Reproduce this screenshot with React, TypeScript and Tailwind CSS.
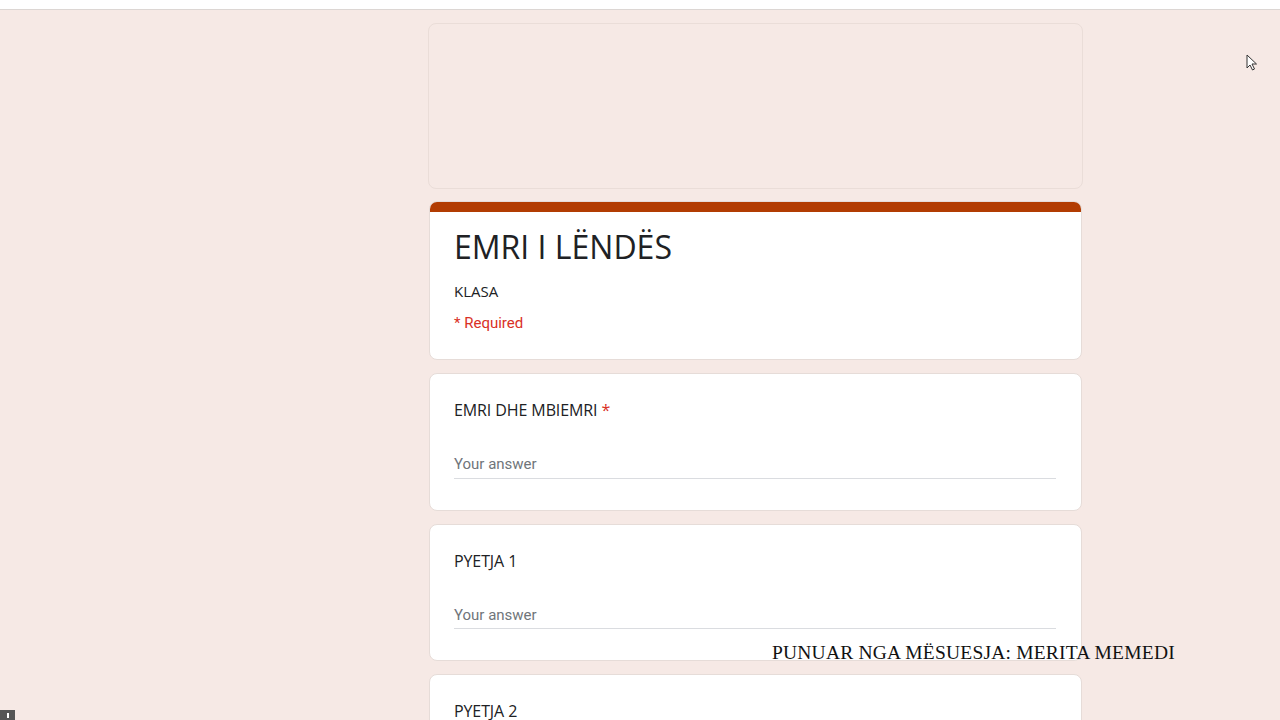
import React from 'react';

const Question = ({ label, required }: { label: string; required?: boolean }) => (
  <div className="bg-white rounded-lg border border-[#e6dcd8] px-6 pt-6 pb-[31px]">
    <div className="text-[16px] text-[#202124] leading-6 tracking-[-0.1px]" style={{ fontFamily: '"Open Sans", sans-serif' }}>
      {label}
      {required && <span className="text-[#d93025]"> *</span>}
    </div>
    <div className="mt-[31px] w-[602px] border-b border-[#dadce0] pb-[2px] text-[15px] text-[#70757a]" style={{ fontFamily: 'Roboto, sans-serif' }}>
      Your answer
    </div>
  </div>
);

export default function App() {
  return (
    <div className="relative h-[720px] w-[1280px] overflow-hidden bg-[#f6e9e5]">
      <div className="h-[10px] bg-white border-b border-[#dcd6d3]" />
      <div className="ml-[428px] w-[655px]">
        <div className="mt-[13px] h-[166px] rounded-lg border border-[#eaddd8] bg-[#f6e9e5]" />
        <div className="mt-[12px] flex flex-col gap-[13px] pl-[1px] pr-[1px]">
          <div className="overflow-hidden rounded-lg border border-[#e6dcd8] bg-white">
            <div className="h-[10px] bg-[#b23c02]" />
            <div className="px-6 pt-[15px] pb-[26px]">
              <div className="text-[32px] leading-10 text-[#202124]" style={{ fontFamily: '"Open Sans", sans-serif' }}>
                EMRI I LËNDËS
              </div>
              <div className="mt-[14px] text-[15px] leading-5 text-[#202124]" style={{ fontFamily: '"Open Sans", sans-serif' }}>
                KLASA
              </div>
              <div className="mt-[12px] text-[15px] leading-5 text-[#d93025]" style={{ fontFamily: 'Roboto, sans-serif' }}>
                * Required
              </div>
            </div>
          </div>
          <Question label="EMRI DHE MBIEMRI" required />
          <Question label="PYETJA 1" />
          <Question label="PYETJA 2" />
        </div>
      </div>
      <div
        className="absolute left-[772px] top-[638px] text-[19.5px] tracking-[0.2px] text-[#111]"
        style={{ fontFamily: '"Liberation Serif", serif' }}
      >
        PUNUAR NGA MËSUESJA: MERITA MEMEDI
      </div>
      <svg className="absolute left-[1246px] top-[54px]" width="12" height="18" viewBox="0 0 12 18">
        <path d="M1 1 L1 14 L4 11 L6.5 16 L8.5 15 L6 10 L10.5 10 Z" fill="white" stroke="#333" strokeWidth="1" />
      </svg>
      <div className="absolute left-0 top-[710px] h-[10px] w-[15px] bg-[#555] flex items-center justify-center">
        <div className="h-[5px] w-[2px] bg-white" />
      </div>
    </div>
  );
}
